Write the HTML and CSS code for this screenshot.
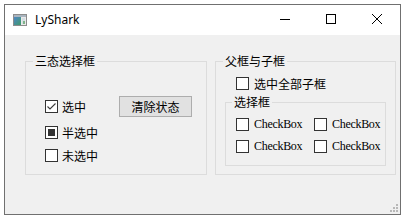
FILE: index.html
```html
<!DOCTYPE html>
<html>
<head>
  <meta charset="UTF-8">
  <title>LyShark</title>
  <link rel="stylesheet" href="styles.css">
</head>
<body>
  <div class="window">
    <div class="titlebar">
      <svg class="app-icon" width="14" height="12" viewBox="0 0 14 12">
        <defs>
          <linearGradient id="ig" x1="0" y1="0" x2="1" y2="1">
            <stop offset="0" stop-color="#4f86c6"/>
            <stop offset="1" stop-color="#3f9a6a"/>
          </linearGradient>
        </defs>
        <rect x="0.5" y="0.5" width="13" height="11" fill="#e9e9e9" stroke="#8c8c8c"/>
        <rect x="1" y="1" width="12" height="2" fill="#a9b4bf"/>
        <rect x="1" y="3" width="7" height="8" fill="url(#ig)"/>
        <rect x="9" y="4" width="3" height="6" fill="#d4dde2"/>
        <rect x="10" y="7" width="2" height="3" fill="#7fb38a"/>
      </svg>
      <span class="title">LyShark</span>
      <div class="caption">
        <span class="cap-btn">
          <svg width="10" height="10" viewBox="0 0 10 10"><path d="M0 5.5H10" stroke="#000" stroke-width="1"/></svg>
        </span>
        <span class="cap-btn">
          <svg width="10" height="10" viewBox="0 0 10 10"><rect x="0.5" y="0.5" width="9" height="9" fill="none" stroke="#000"/></svg>
        </span>
        <span class="cap-btn">
          <svg width="10" height="10" viewBox="0 0 10 10"><path d="M0 0L10 10M10 0L0 10" stroke="#000" stroke-width="1"/></svg>
        </span>
      </div>
    </div>

    <div class="client">
      <div class="group group-tristate">
        <span class="group-title">三态选择框</span>
        <div class="row row-top">
          <label class="check check-wide">
            <span class="box"><svg width="11" height="11" viewBox="0 0 11 11"><path d="M1.5 5.5L4 8L9.5 2.5" fill="none" stroke="#3a3a3a" stroke-width="1.1"/></svg></span>
            选中
          </label>
          <button class="btn">清除状态</button>
        </div>
        <div class="row row-mid">
          <label class="check"><span class="box partial"></span>半选中</label>
        </div>
        <div class="row row-last">
          <label class="check"><span class="box"></span>未选中</label>
        </div>
      </div>

      <div class="group group-parent">
        <span class="group-title">父框与子框</span>
        <label class="check check-all"><span class="box"></span>选中全部子框</label>
        <div class="group group-child">
          <span class="group-title">选择框</span>
          <div class="child-grid">
            <label class="check latin"><span class="box"></span>CheckBox</label>
            <label class="check latin"><span class="box"></span>CheckBox</label>
            <label class="check latin"><span class="box"></span>CheckBox</label>
            <label class="check latin"><span class="box"></span>CheckBox</label>
          </div>
        </div>
      </div>

      <svg class="grip" width="8" height="8" viewBox="0 0 8 8">
        <rect x="6" y="0" width="2" height="2" fill="#b8b8b8"/>
        <rect x="3" y="3" width="2" height="2" fill="#b8b8b8"/>
        <rect x="6" y="3" width="2" height="2" fill="#b8b8b8"/>
        <rect x="0" y="6" width="2" height="2" fill="#b8b8b8"/>
        <rect x="3" y="6" width="2" height="2" fill="#b8b8b8"/>
        <rect x="6" y="6" width="2" height="2" fill="#b8b8b8"/>
      </svg>
    </div>
  </div>
</body>
</html>
```

FILE: styles.css
```css
body {
  margin: 0;
  background: #fff;
  font-family: "Noto Sans CJK SC", sans-serif;
  font-size: 12px;
  color: #000;
}
.window {
  margin: 4px 0 0 4px;
  width: 395px;
  height: 209px;
  border: 1px solid #707070;
  background: #f0f0f0;
  display: flex;
  flex-direction: column;
}
.titlebar {
  height: 30px;
  background: #fff;
  display: flex;
  align-items: center;
}
.app-icon {
  margin-left: 8px;
  margin-bottom: 1px;
}
.title {
  margin-left: 8px;
  font-family: "Noto Sans", sans-serif;
  font-size: 12px;
  margin-bottom: 1px;
}
.caption {
  margin-left: auto;
  display: flex;
}
.cap-btn {
  width: 46px;
  height: 30px;
  display: flex;
  align-items: center;
  justify-content: center;
  padding-bottom: 2px;
  box-sizing: border-box;
}
.client {
  flex: 1;
  position: relative;
  display: flex;
  align-items: flex-start;
  gap: 8px;
  padding: 26px 0 0 20px;
}
.group {
  position: relative;
  box-sizing: border-box;
  border: 1px solid #dcdcdc;
}
.group-title {
  position: absolute;
  top: -8px;
  left: 7px;
  padding: 0 2px;
  line-height: 14px;
  background: #f0f0f0;
}
.group-tristate {
  width: 182px;
  height: 114px;
  padding: 34px 0 0 19px;
}
.row {
  display: flex;
  align-items: center;
}
.row-top {
  height: 21px;
}
.row-mid {
  margin-top: 9px;
  height: 13px;
}
.row-last {
  margin-top: 10px;
  height: 13px;
}
.check {
  display: flex;
  align-items: center;
  gap: 4px;
  height: 13px;
  line-height: 13px;
  white-space: nowrap;
}
.check-wide {
  width: 74px;
}
.box {
  flex: none;
  width: 13px;
  height: 13px;
  box-sizing: border-box;
  border: 1px solid #333;
  background: #fff;
  display: flex;
  align-items: center;
  justify-content: center;
}
.box.partial::after {
  content: "";
  width: 7px;
  height: 7px;
  background: #333;
}
.btn {
  width: 73px;
  height: 21px;
  padding: 0;
  border: 1px solid #adadad;
  background: #e1e1e1;
  font-family: "Noto Sans CJK SC", sans-serif;
  font-size: 12px;
  color: #000;
}
.group-parent {
  width: 181px;
  height: 114px;
  padding: 15px 0 0 9px;
}
.check-all {
  margin-left: 11px;
  gap: 5px;
}
.group-child {
  margin: 12px 9px 0 0;
  height: 64px;
  padding: 15px 0 0 10px;
}
.group-child .group-title {
  left: 6px;
}
.child-grid {
  display: grid;
  grid-template-columns: 78px 78px;
  row-gap: 9px;
}
.latin {
  font-family: "Liberation Serif", serif;
  font-size: 12px;
  letter-spacing: -0.3px;
  gap: 5px;
}
.grip {
  position: absolute;
  right: 2px;
  bottom: 2px;
}
```
